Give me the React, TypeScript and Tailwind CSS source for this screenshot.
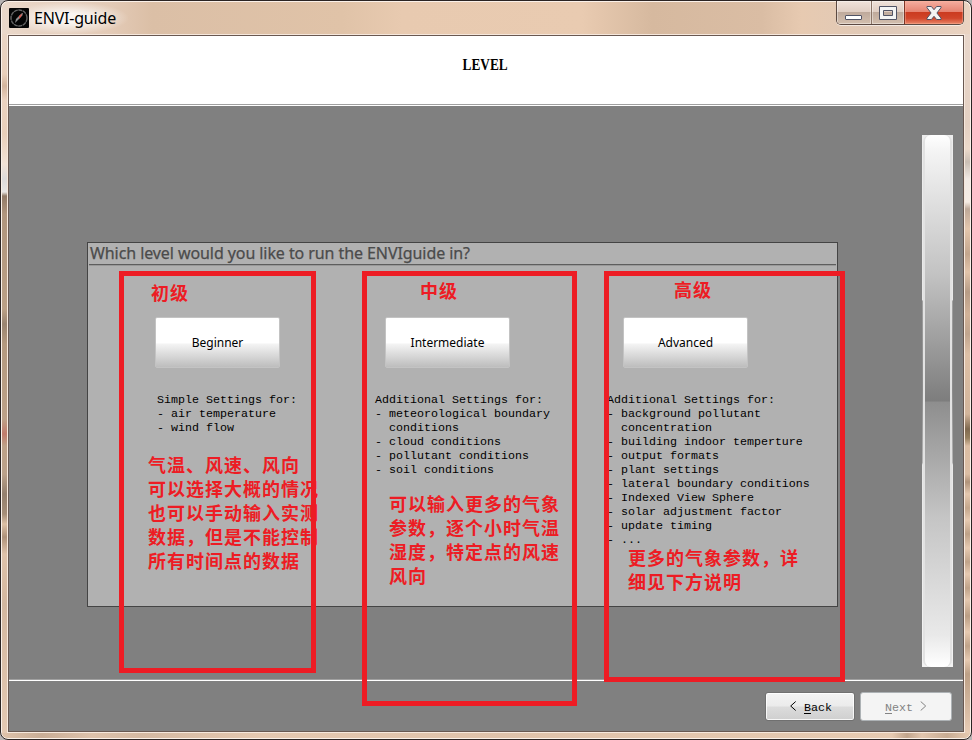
import { ReactNode } from 'react'

type Level = {
  label: string
  column: string
  button: string
  text: string
  lines: string[]
}

const LEVELS: Level[] = [
  {
    label: 'Beginner',
    column: 'w-[220px]',
    button: '',
    text: 'pl-0.5',
    lines: ['Simple Settings for:', '- air temperature', '- wind flow'],
  },
  {
    label: 'Intermediate',
    column: 'w-[232px]',
    button: 'ml-2.5',
    text: '',
    lines: [
      'Additional Settings for:',
      '- meteorological boundary',
      '  conditions',
      '- cloud conditions',
      '- pollutant conditions',
      '- soil conditions',
    ],
  },
  {
    label: 'Advanced',
    column: 'w-[225px]',
    button: 'ml-4',
    text: '',
    lines: [
      'Additional Settings for:',
      '- background pollutant',
      '  concentration',
      '- building indoor temperture',
      '- output formats',
      '- plant settings',
      '- lateral boundary conditions',
      '- Indexed View Sphere',
      '- solar adjustment factor',
      '- update timing',
      '- ...',
    ],
  },
]

function AppIcon() {
  return (
    <svg width="20" height="20" viewBox="0 0 20 20">
      <rect width="20" height="20" rx="1" fill="#050505" />
      <circle cx="10" cy="10" r="8" fill="none" stroke="#666" strokeWidth="1.4" strokeDasharray="4 .6" />
      <path d="M6 15 7 11l5.5-5.5L14 5l-.7 2.5L8 13z" fill="#909090" />
      <path d="m10 8 3-2.5-.8 3L10 11z" fill="#d85a50" />
    </svg>
  )
}

function WindowControls() {
  return (
    <div className="mr-1.5 mt-[-1px] flex h-6 w-[128px] overflow-hidden rounded-b-[5px] border border-t-0 border-[#5c4a43] shadow-[0_1px_0_#fff9]">
      <div className="flex w-[35px] justify-center border-r border-[#8b7568] bg-[linear-gradient(#f0e2da_0,#dfcdc2_48%,#bfaa9c_50%,#d3bfae_100%)] shadow-[inset_0_0_0_1px_#fff6]">
        <svg width="18" height="24" viewBox="0 0 18 24">
          <rect x=".5" y="14.5" width="16" height="4" rx=".5" fill="#fff" stroke="#505365" />
        </svg>
      </div>
      <div className="flex w-[33px] justify-center border-r border-[#7e3426] bg-[linear-gradient(#f0e2da_0,#dfcdc2_48%,#bfaa9c_50%,#d3bfae_100%)] shadow-[inset_0_0_0_1px_#fff6]">
        <svg width="18" height="24" viewBox="0 0 18 24">
          <path d="M.5 5.5h17v13H.5zM4.5 9.5v5h9v-5z" fill="#f4f4f4" fillRule="evenodd" stroke="#505365" />
        </svg>
      </div>
      <div className="flex flex-1 justify-center bg-[linear-gradient(#f5aea0_0,#e68472_46%,#cb3b20_50%,#d1452a_75%,#e98668_100%)] shadow-[inset_0_0_0_1px_#ffb9a066]">
        <svg width="18" height="24" viewBox="0 0 18 24">
          <path
            d="M2 5.5h4.4L9 8.7l2.6-3.2H16v1.2L11.9 12l4.1 5.2v1.3h-4.4L9 15.3l-2.6 3.2H2v-1.3L6.1 12 2 6.7z"
            fill="#f3f3f3"
            stroke="#505365"
            strokeLinejoin="round"
          />
        </svg>
      </div>
    </div>
  )
}

function TitleBar() {
  return (
    <div className="flex h-8 shrink-0 items-start justify-between rounded-t-[6px] bg-[linear-gradient(90deg,#ead8ca_0,#e3cab6_110px,#dbbfa6_150px,#e0c3a8_340px,#e8cab0_400px,#e9cbb1_580px,#d6b99f_650px,#dabda4_760px,#e7cab1_800px,#dfc9b8_880px,#ead3c1_100%)] pl-[7px]">
      <div className="flex h-full items-center gap-[5px] bg-[radial-gradient(ellipse_at_center,#fffc_20%,#fff0_72%)] pr-3">
        <AppIcon />
        <span className="whitespace-pre font-['Noto_Sans'] text-[16px] leading-8 tracking-[-0.2px] text-black">ENVI-guide</span>
      </div>
      <WindowControls />
    </div>
  )
}

function LevelColumn({ level }: { level: Level }) {
  return (
    <div className={`shrink-0 ${level.column}`}>
      <button
        className={`block h-[51px] w-[125px] rounded-[2px] border border-[#c3c3c3] bg-[linear-gradient(#fff_0,#fff_50%,#f3f3f3_54%,#bdbdbd_100%)] font-['Noto_Sans'] text-[12px] text-black ${level.button}`}
      >
        {level.label}
      </button>
      <div className={`mt-[25px] whitespace-pre font-['Liberation_Mono',monospace] text-[11.667px] leading-[14px] text-black ${level.text}`}>
        {level.lines.map((line) => (
          <div key={line}>{line}</div>
        ))}
      </div>
    </div>
  )
}

function LevelPanel() {
  return (
    <div className="ml-[78px] mt-[136px] h-[365px] w-[751px] shrink-0 border border-[#444] bg-[#b1b1b1]">
      <div className="mx-px h-[22px] border-b border-[#5e5e5e] shadow-[0_1px_0_#999]">
        <h2 className="whitespace-pre pl-px font-['Noto_Sans'] text-[16px] leading-[21px] tracking-[-0.08px] text-[#4b4b4b] [-webkit-text-stroke:0.25px_#4b4b4b]">
          Which level would you like to run the ENVIguide in?
        </h2>
      </div>
      <div className="mt-[52px] flex pl-[67px]">
        {LEVELS.map((level) => (
          <LevelColumn key={level.label} level={level} />
        ))}
      </div>
    </div>
  )
}

function ProgressColumn() {
  return (
    <div className="mr-2.5 mt-[29px] h-[532px] w-[31px] shrink-0 bg-[linear-gradient(#ededed_0,#e8e8e8_31%,#a0a0a0_31.2%,#8b8b8b_48%,#b5b5b5_61.6%,#e8e8e8_62%,#f3f3f3_100%)] px-px">
      <div className="h-full rounded-[7px] bg-[#e2e2e2] px-0.5">
        <div className="h-full rounded-[6px] bg-[linear-gradient(#fff_0,#f4f4f4_3%,#c3c3c3_26%,#7d7d7d_50%,#8e8e8e_50.2%,#c5c5c5_72%,#e9e9e9_94%,#fff_100%)]" />
      </div>
    </div>
  )
}

function Note({ className, children }: { className: string; children: ReactNode }) {
  return (
    <div
      className={`absolute whitespace-pre font-['Noto_Sans_CJK_SC',sans-serif] text-[18px] font-bold leading-6 tracking-[1px] text-[#ed1c24] ${className}`}
    >
      {children}
    </div>
  )
}

// Red boxes and notes drawn over the whole window
function Annotations() {
  return (
    <div className="pointer-events-none absolute inset-0">
      <div className="absolute left-[119px] top-[271px] h-[402px] w-[197px] border-5 border-[#ed1c24]" />
      <div className="absolute left-[362px] top-[271px] h-[435px] w-[215px] border-5 border-[#ed1c24]" />
      <div className="absolute left-[604px] top-[271px] h-[411px] w-[241px] border-5 border-[#ed1c24]" />
      <Note className="left-[151px] top-[280px]">初级</Note>
      <Note className="left-[420px] top-[278px]">中级</Note>
      <Note className="left-[674px] top-[277px]">高级</Note>
      <Note className="left-[148px] top-[452px]">
        {'气温、风速、风向\n可以选择大概的情况\n也可以手动输入实测\n数据，但是不能控制\n所有时间点的数据'}
      </Note>
      <Note className="left-[389px] top-[491px]">
        {'可以输入更多的气象\n参数，逐个小时气温\n湿度，特定点的风速\n风向'}
      </Note>
      <Note className="left-[628px] top-[545px]">{'更多的气象参数，详\n细见下方说明'}</Note>
    </div>
  )
}

export default function App() {
  return (
    <div className="relative h-[740px] w-[972px] overflow-hidden bg-[#b8b4b4]">
      <div className="flex h-full flex-col rounded-[8px] border border-[#2b2423] bg-[#fbf1e9] p-px">
        <TitleBar />
        <div className="flex h-[699px] shrink-0">
          <div className="w-[5px] shrink-0 bg-[linear-gradient(#ead5c5_0,#e9cfbb_40px,#d3b49d_52px,#ebd2c0_66px,#e9cfba_100px,#f2e2d6_130px,#dddada_145px,#e8e5e3_158px,#917a67_162px,#b0957d_180px,#bba086_275px,#9a8470_290px,#b4997f_310px,#bda188_385px,#c17c6c_400px,#bda188_412px,#bba18a_440px,#947f6d_460px,#a68e78_480px,#ddc0a5_490px,#ae9179_503px,#dfc2aa_520px,#d3b79f_570px,#e4c9b3_100%)]" />
          <div className="w-[956px] flex-1 border border-[#f6e8dd]">
            <div className="flex h-full flex-col border border-[#695851] bg-[#808080]">
              <header className="flex h-[70px] shrink-0 justify-center border-b border-white bg-white">
                <div className="flex w-full justify-center border-b border-[#a0a0a0]">
                  <h1 className="mr-0.5 mt-[17px] origin-center scale-x-[.83] font-['Liberation_Serif',serif] text-[16px] font-bold leading-6 text-black">
                    LEVEL
                  </h1>
                </div>
              </header>
              <main className="flex h-[573px] shrink-0 justify-between">
                <LevelPanel />
                <ProgressColumn />
              </main>
              <footer className="flex flex-1 justify-end gap-[5px] border-t border-[#a0a0a0] pr-[11px] shadow-[inset_0_1px_0_#fff]">
                <button className="mt-3 flex h-[29px] w-[90px] items-center gap-[7px] rounded-[3px] border border-[#707070] bg-[linear-gradient(#f3f3f3_0,#ebebeb_49%,#dcdcdc_51%,#cfcfcf_100%)] pl-6 font-['Liberation_Mono',monospace] text-[11.667px] text-black shadow-[inset_0_0_0_1px_#fffc]">
                  <svg width="7" height="10" viewBox="0 0 7 10" className="-mt-0.5">
                    <path d="m5.7.5-5 4.5 5 4.5" fill="none" stroke="currentColor" />
                  </svg>
                  <span className="pt-1">
                    <u className="underline-offset-2">B</u>ack
                  </span>
                </button>
                <button className="mt-3 flex h-[29px] w-[92px] items-center gap-[7px] rounded-[3px] border border-[#adb2b5] bg-[#f4f4f4] pl-6 font-['Liberation_Mono',monospace] text-[11.667px] text-[#838383]">
                  <span className="pt-1">
                    <u className="underline-offset-2">N</u>ext
                  </span>
                  <svg width="7" height="10" viewBox="0 0 7 10" className="-mt-0.5">
                    <path d="m.7.5 5 4.5-5 4.5" fill="none" stroke="currentColor" />
                  </svg>
                </button>
              </footer>
            </div>
          </div>
          <div className="w-[5px] shrink-0 bg-[linear-gradient(#e8d6ca_0,#e4d0c2_90px,#ecd9ca_115px,#cabeb4_128px,#f1e9e3_145px,#f6ece4_168px,#bfa999_175px,#e4c6ac_195px,#c4a68d_220px,#e2c4aa_238px,#b79c86_258px,#d2b298_280px,#c1a58e_300px,#dec0a6_320px,#d3b59b_380px,#80694f_395px,#97805f_404px,#dbbda3_412px,#dcbea4_440px,#b0937a_448px,#e5c8af_460px,#c5a78c_474px,#e7cab1_486px,#bea187_500px,#e7cab1_514px,#c1a48a_528px,#e7cab1_540px,#c0a389_554px,#e5c8af_566px,#bb9e84_582px,#e7cab1_598px,#c0a389_612px,#e7cab1_626px,#bda086_640px,#e8ccb5_100%)]" />
        </div>
        <div className="h-[5px] shrink-0 rounded-b-[6px] bg-[linear-gradient(90deg,#dfc2aa_0,#c9ad96_40px,#dec2ab_90px,#d5b9a2_140px,#e5c8b0_260px,#dfc2aa_500px,#e7cab1_890px,#c2a58c_905px,#e3c6ae_920px,#c9ac93_945px,#e7cab1_100%)]" />
      </div>
      <Annotations />
    </div>
  )
}
